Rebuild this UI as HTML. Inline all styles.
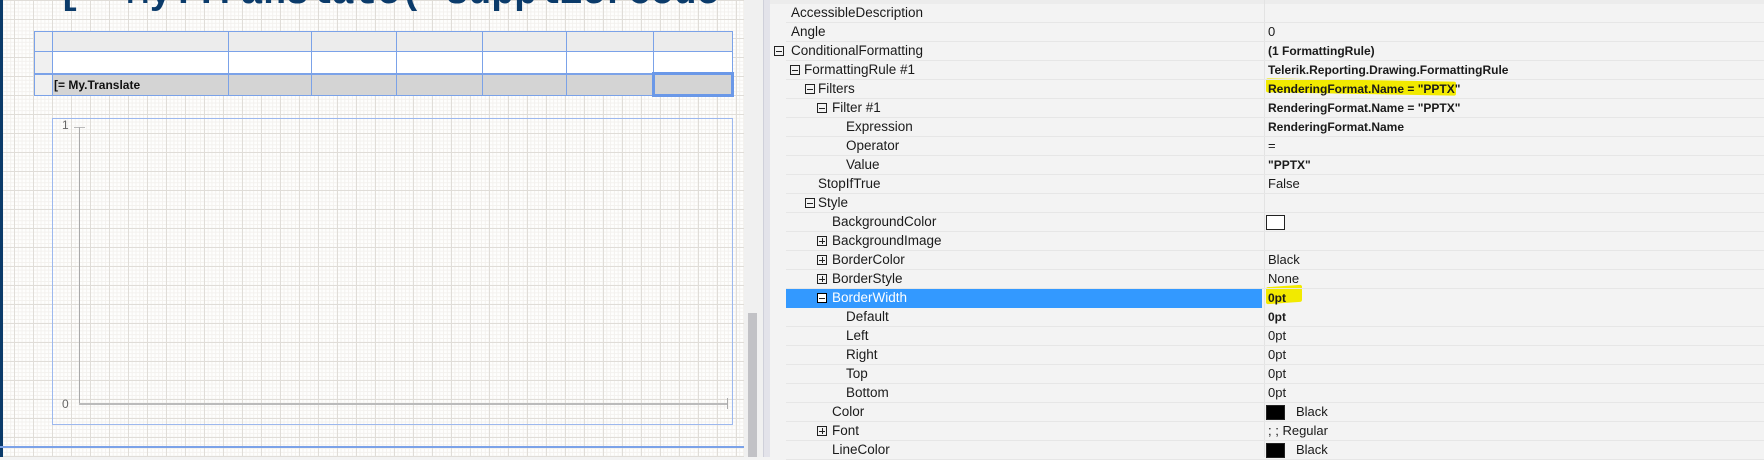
<!DOCTYPE html>
<html><head><meta charset="utf-8"><style>
*{margin:0;padding:0;box-sizing:border-box}
body{width:1764px;height:457px;overflow:hidden;background:#f3f3f3;font-family:"Liberation Sans",sans-serif;position:relative}
#left{position:absolute;left:0;top:0;width:744px;height:457px;overflow:hidden;background-color:#fefefd;
background-image:
linear-gradient(90deg,#e0ddd8 1px,transparent 1px),
linear-gradient(0deg,#e0ddd8 1px,transparent 1px),
linear-gradient(90deg,#f3f1ee 1px,transparent 1px),
linear-gradient(0deg,#f3f1ee 1px,transparent 1px);
background-size:19px 19px,19px 19px,3.8px 3.8px,3.8px 3.8px;
background-position:14px 0,0 1px,14px 0,0 1px}
.abs{position:absolute}
#title{position:absolute;left:58px;top:-25px;font:bold 38px/38px "Liberation Mono",monospace;color:#0b3b6a;white-space:nowrap}
table.t{position:absolute;left:34px;top:31px;border-collapse:collapse}
table.t td{border:1px solid #7ba2e8;padding:0;font:bold 12px "Liberation Sans",sans-serif;color:#111}
#grid{position:absolute;left:770px;top:0;width:994px;height:457px}
.row{position:absolute;left:16px;right:0;height:19px;border-bottom:1px solid #e6e6e6;font-size:13.5px;color:#1a1a1a;line-height:18px}
.row .n{position:absolute;top:0;white-space:nowrap}
.row .v{position:absolute;left:482px;top:0;white-space:nowrap;font-size:13px}
.b{font-weight:bold;font-size:12px!important}
.box{position:absolute;top:4px;width:10px;height:10px;border:1px solid #222;}
.box:before{content:"";position:absolute;left:1px;top:3.5px;width:6px;height:1px;background:#222}
.box.p:after{content:"";position:absolute;left:3.5px;top:1px;width:1px;height:6px;background:#222}
.sw{position:absolute;left:480px;top:2px;width:19px;height:15px;border:1px solid #222}
.hl{position:absolute;background:#f2ea00;border-radius:2px}
</style></head><body>
<div id="left">
  <div id="title">[= My.Translate( supplierCode</div>
  <div class="abs" style="left:0;top:0;width:3px;height:457px;background:#0b3b6a"></div>
  <table class="t">
    <tr style="height:20px"><td style="width:18px;background:#f0f0f0"></td><td style="width:176px;background:#ececec"></td><td style="width:83px;background:#ececec"></td><td style="width:85px;background:#ececec"></td><td style="width:86px;background:#ececec"></td><td style="width:84px;background:#ececec"></td><td style="width:87px;background:#ececec"></td><td style="width:79px;background:#ececec"></td></tr>
    <tr style="height:22px"><td style="background:#f0f0f0"></td><td style="background:#fff"></td><td style="background:#fff"></td><td style="background:#fff"></td><td style="background:#fff"></td><td style="background:#fff"></td><td style="background:#fff"></td><td style="background:#fff"></td></tr>
    <tr style="height:22px;border-top:2px solid #7ba2e8"><td style="background:#f0f0f0"></td><td style="background:#d4d4d4;padding-left:1px;white-space:nowrap">[= My.Translate</td><td style="background:#d4d4d4"></td><td style="background:#d4d4d4"></td><td style="background:#d4d4d4"></td><td style="background:#d4d4d4"></td><td style="background:#d4d4d4"></td><td style="background:#d4d4d4;border:3px solid #6a98e8"></td></tr>
  </table>
  <div class="abs" style="left:52px;top:118px;width:681px;height:307px;border:1px solid #9db8ee"></div>
  <div class="abs" style="left:62px;top:118px;font-size:12px;color:#666">1</div>
  <div class="abs" style="left:62px;top:397px;font-size:12px;color:#666">0</div>
  <div class="abs" style="left:74px;top:127px;width:11px;height:1px;background:#bbb"></div>
  <div class="abs" style="left:79px;top:127px;width:1px;height:277px;background:#aaa"></div>
  <div class="abs" style="left:79px;top:403px;width:648px;height:2px;background:#bbb"></div>
  <div class="abs" style="left:727px;top:398px;width:1px;height:11px;background:#aaa"></div>
  <div class="abs" style="left:0;top:446px;width:744px;height:2px;background:#7ba2e8"></div>
</div>
<div class="abs" style="left:744px;top:0;width:19px;height:457px;background:#f0f0f0"></div>
<div class="abs" style="left:748px;top:313px;width:9px;height:144px;background:#c2c2c6"></div>
<div class="abs" style="left:763px;top:0;width:7px;height:457px;background:#e3e3ea;border-left:1px solid #cfd0da"></div>
<div id="grid">
  <div class="abs" style="left:0;top:0;width:994px;height:4px;background:#ececec"></div>
  <div class="abs" style="left:494px;top:0;width:1px;height:457px;background:#e3e3e3"></div>
  <div class="hl" style="left:496px;top:80px;width:190px;height:14px;transform:skewY(1deg)"></div>
  <div class="hl" style="left:496px;top:286px;width:36px;height:17px;transform:skewY(-4deg)"></div>

  <div class="row" style="top:4px"><span class="n" style="left:5px">AccessibleDescription</span></div>
  <div class="row" style="top:23px"><span class="n" style="left:5px">Angle</span><span class="v">0</span></div>
  <div class="row" style="top:42px"><i class="box" style="left:-12px"></i><span class="n" style="left:5px">ConditionalFormatting</span><span class="v b">(1 FormattingRule)</span></div>
  <div class="row" style="top:61px"><i class="box" style="left:4px"></i><span class="n" style="left:18px">FormattingRule #1</span><span class="v b">Telerik.Reporting.Drawing.FormattingRule</span></div>
  <div class="row" style="top:80px"><i class="box" style="left:19px"></i><span class="n" style="left:32px">Filters</span><span class="v b">RenderingFormat.Name = "PPTX"</span></div>
  <div class="row" style="top:99px"><i class="box" style="left:31px"></i><span class="n" style="left:46px">Filter #1</span><span class="v b">RenderingFormat.Name = "PPTX"</span></div>
  <div class="row" style="top:118px"><span class="n" style="left:60px">Expression</span><span class="v b">RenderingFormat.Name</span></div>
  <div class="row" style="top:137px"><span class="n" style="left:60px">Operator</span><span class="v">=</span></div>
  <div class="row" style="top:156px"><span class="n" style="left:60px">Value</span><span class="v b">"PPTX"</span></div>
  <div class="row" style="top:175px"><span class="n" style="left:32px">StopIfTrue</span><span class="v">False</span></div>
  <div class="row" style="top:194px"><i class="box" style="left:19px"></i><span class="n" style="left:32px">Style</span></div>
  <div class="row" style="top:213px"><span class="n" style="left:46px">BackgroundColor</span><i class="sw" style="background:#fff"></i></div>
  <div class="row" style="top:232px"><i class="box p" style="left:31px"></i><span class="n" style="left:46px">BackgroundImage</span></div>
  <div class="row" style="top:251px"><i class="box p" style="left:31px"></i><span class="n" style="left:46px">BorderColor</span><span class="v">Black</span></div>
  <div class="row" style="top:270px"><i class="box p" style="left:31px"></i><span class="n" style="left:46px">BorderStyle</span><span class="v">None</span></div>
  <div class="row" style="top:289px;border-bottom:none"><div class="abs" style="left:0;top:0;width:476px;height:19px;background:#3399ff"></div><i class="box" style="left:31px;border-color:#000;background:#fff"></i><span class="n" style="left:46px;color:#fff">BorderWidth</span><span class="v b">0pt</span></div>
  <div class="row" style="top:308px"><span class="n" style="left:60px">Default</span><span class="v b">0pt</span></div>
  <div class="row" style="top:327px"><span class="n" style="left:60px">Left</span><span class="v">0pt</span></div>
  <div class="row" style="top:346px"><span class="n" style="left:60px">Right</span><span class="v">0pt</span></div>
  <div class="row" style="top:365px"><span class="n" style="left:60px">Top</span><span class="v">0pt</span></div>
  <div class="row" style="top:384px"><span class="n" style="left:60px">Bottom</span><span class="v">0pt</span></div>
  <div class="row" style="top:403px"><span class="n" style="left:46px">Color</span><i class="sw" style="background:#000"></i><span class="v" style="left:510px">Black</span></div>
  <div class="row" style="top:422px"><i class="box p" style="left:31px"></i><span class="n" style="left:46px">Font</span><span class="v">; ; Regular</span></div>
  <div class="row" style="top:441px"><span class="n" style="left:46px">LineColor</span><i class="sw" style="background:#000"></i><span class="v" style="left:510px">Black</span></div>
</div>
</body></html>
